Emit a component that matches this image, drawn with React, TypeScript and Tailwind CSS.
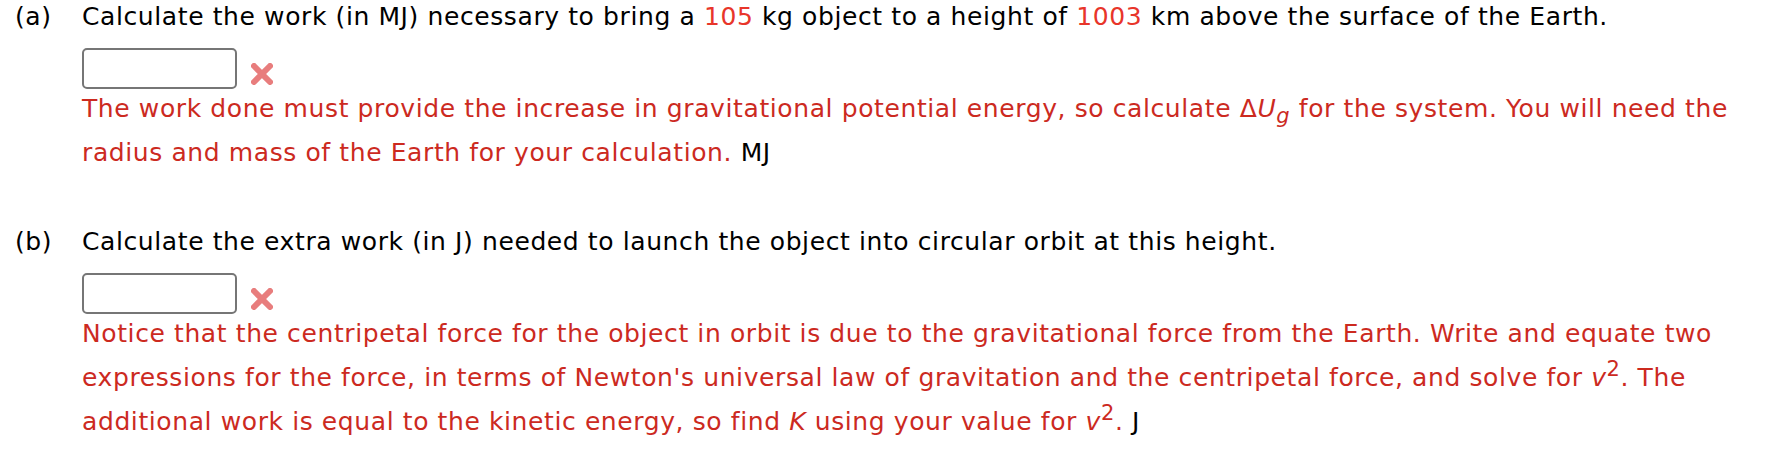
import React from 'react';

const RED = 'text-[#cc2a1f]';

const WrongMark: React.FC = () => (
  <svg width="26" height="26" viewBox="0 0 26 26" className="shrink-0">
    <g stroke="#e35d5d" strokeWidth="6" strokeLinecap="round" opacity="0.8">
      <line x1="5" y1="5" x2="21" y2="21" />
      <line x1="21" y1="5" x2="5" y2="21" />
    </g>
  </svg>
);

const AnswerBox: React.FC = () => (
  <div className="flex items-end gap-[12px] h-[40px] mt-[15px]">
    <input
      type="text"
      className="w-[155px] h-[41px] border-2 border-[#767676] rounded-[5px] bg-white outline-none"
    />
    <div className="mb-[2px]">
      <WrongMark />
    </div>
  </div>
);

const Part: React.FC<{ label: string; question: React.ReactNode; hint: React.ReactNode; className?: string }> = ({
  label,
  question,
  hint,
  className = '',
}) => (
  <div className={`flex ${className}`}>
    <div className="w-[67px] shrink-0 leading-[34px]">{label}</div>
    <div className="flex-1">
      <div className="leading-[34px]">{question}</div>
      <AnswerBox />
      <p className="leading-[44px] -mt-[2px]">{hint}</p>
    </div>
  </div>
);

const App: React.FC = () => {
  return (
    <div
      className="min-h-screen bg-white text-black text-[25px] tracking-[0.6px] pl-[15px] pr-[30px]"
      style={{ fontFamily: '"DejaVu Sans", Verdana, sans-serif' }}
    >
      {/* Part (a) */}
      <Part
        label="(a)"
        question={
          <>
            Calculate the work (in MJ) necessary to bring a <span className="text-[#e8352a]">105</span> kg object to a
            height of <span className="text-[#e8352a]">1003</span> km above the surface of the Earth.
          </>
        }
        hint={
          <>
            <span className={RED}>
              The work done must provide the increase in gravitational potential energy, so calculate Δ
              <i>U</i>
              <sub className="italic text-[21px] leading-none relative top-[6px]">g</sub> for the system. You will
              need the radius and mass of the Earth for your calculation.
            </span>{' '}
            MJ
          </>
        }
      />

      {/* Part (b) */}
      <Part
        className="mt-[50px]"
        label="(b)"
        question={<>Calculate the extra work (in J) needed to launch the object into circular orbit at this height.</>}
        hint={
          <>
            <span className={RED}>
              Notice that the centripetal force for the object in orbit is due to the gravitational force from the
              Earth. Write and equate two expressions for the force, in terms of Newton's universal law of gravitation
              and the centripetal force, and solve for <i>v</i>
              <sup className="text-[21px] leading-none">2</sup>. The additional work is equal to the kinetic energy, so
              find <i>K</i> using your value for <i>v</i>
              <sup className="text-[21px] leading-none">2</sup>.
            </span>{' '}
            J
          </>
        }
      />
    </div>
  );
};

export default App;
